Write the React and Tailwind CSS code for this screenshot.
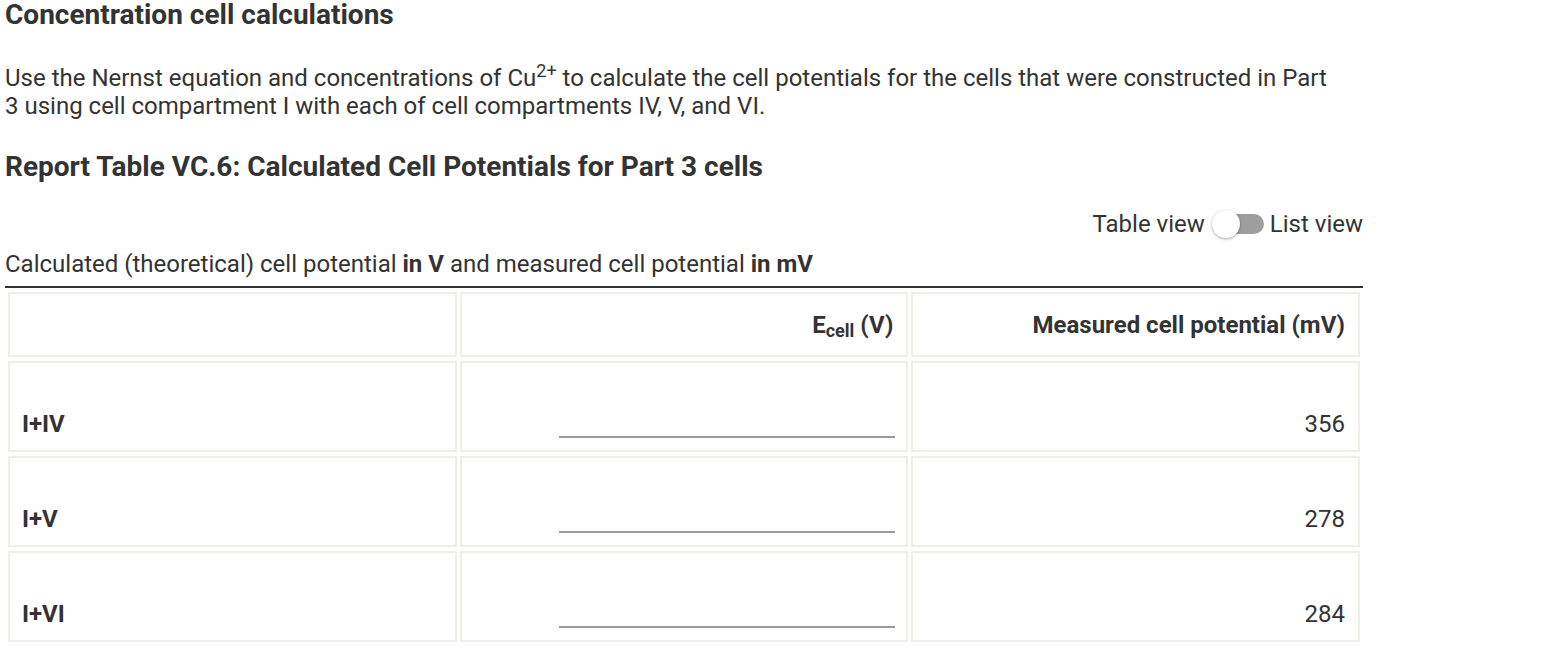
import React from "react";

const rows = [
  { label: "I+IV", measured: "356" },
  { label: "I+V", measured: "278" },
  { label: "I+VI", measured: "284" },
];

function Toggle() {
  return (
    <span className="relative inline-flex items-center w-[52px] h-[28px] ml-[7px] mr-[6px]">
      <span className="absolute left-[14px] right-0 h-[20px] rounded-full bg-[#9e9e9e]" />
      <span className="absolute left-0 w-[28px] h-[28px] rounded-full bg-white shadow-[0_1px_3px_rgba(0,0,0,0.35)]" />
    </span>
  );
}

export default function App() {
  return (
    <div className="bg-white text-[#333] font-['Roboto',sans-serif] px-[5px] w-[1368px]">
      <h2 className="text-[28px] leading-[30px] font-bold">Concentration cell calculations</h2>

      <p className="mt-[34px] w-[1340px] text-[24px] leading-[28px]">
        Use the Nernst equation and concentrations of Cu<sup className="text-[18px] leading-none">2+</sup> to calculate
        the cell potentials for the cells that were constructed in Part 3 using cell compartment I with each of cell
        compartments IV, V, and VI.
      </p>

      <h3 className="mt-[32px] text-[28px] leading-[30px] font-bold">
        Report Table VC.6: Calculated Cell Potentials for Part 3 cells
      </h3>

      <div className="mt-[28px] flex items-center justify-end text-[24px] leading-[28px]">
        <span>Table view</span>
        <Toggle />
        <span>List view</span>
      </div>

      <div className="mt-[12px] text-[24px] leading-[28px]">
        Calculated (theoretical) cell potential <b>in V</b> and measured cell potential <b>in mV</b>
      </div>

      <div className="mt-[8px] border-t-2 border-[#333]">
        <table className="w-full table-fixed border-separate border-spacing-x-[3px] border-spacing-y-[4px] text-[24px] leading-[28px]">
          <thead>
            <tr>
              <th className="w-1/3 h-[65px] border-2 border-[#efefea]" />
              <th className="w-1/3 h-[65px] border-2 border-[#efefea] px-[13px] text-right font-bold">
                E<sub className="text-[18px] leading-none">cell</sub> (V)
              </th>
              <th className="w-1/3 h-[65px] border-2 border-[#efefea] px-[13px] text-right font-bold">
                Measured cell potential (mV)
              </th>
            </tr>
          </thead>
          <tbody>
            {rows.map((r) => (
              <tr key={r.label}>
                <td className="h-[91px] border-2 border-[#efefea] px-[12px] pb-[12px] align-bottom font-bold">
                  {r.label}
                </td>
                <td className="h-[91px] border-2 border-[#efefea] px-[11px] pb-[12px] align-bottom">
                  <div className="flex justify-end">
                    <span className="block w-[336px] h-[2px] bg-[#9a9a9a]" />
                  </div>
                </td>
                <td className="h-[91px] border-2 border-[#efefea] px-[13px] pb-[12px] align-bottom text-right">
                  {r.measured}
                </td>
              </tr>
            ))}
          </tbody>
        </table>
      </div>
    </div>
  );
}
